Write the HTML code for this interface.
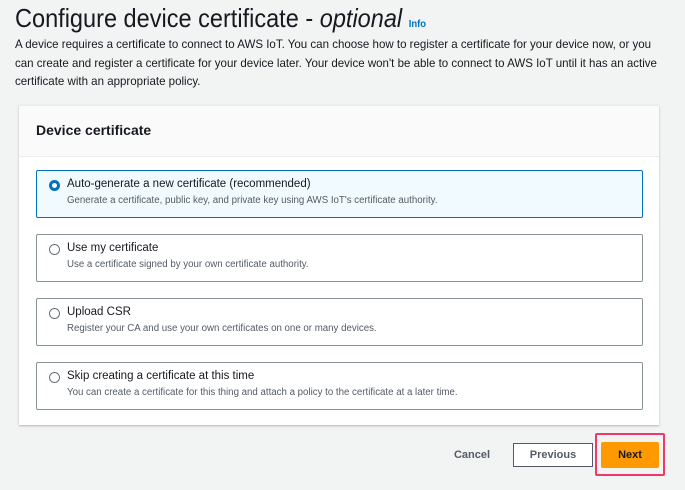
<!DOCTYPE html>
<html><head><style>
body{margin:0;width:685px;height:490px;background:#f2f3f3;font-family:"Liberation Sans",sans-serif;color:#16191f;overflow:hidden;position:relative}
.abs{position:absolute}
h1{position:absolute;left:15px;top:3px;margin:0;font-weight:400;font-size:26px;white-space:nowrap;transform:scaleX(0.905);transform-origin:left top}
h1 i{font-style:italic}
h1 .info{font-size:10.5px;color:#0073bb;font-weight:700;font-style:normal}
p{position:absolute;left:15px;top:35px;margin:0;font-size:12px;line-height:18.5px;color:#16191f;white-space:nowrap;transform:scaleX(0.96);transform-origin:left top}
.card{left:19px;top:105px;width:640px;height:319px;background:#fff;box-shadow:0 1px 2px rgba(0,0,0,.25);border-top:1px solid #eaeded}
.hdr{left:0;top:0;width:640px;height:50px;background:#fafafa;border-bottom:1px solid #eaeded}
.hdr b{position:absolute;left:17px;top:16px;font-size:14px}
.opt{left:17px;width:605px;height:46px;border:1px solid #879596;border-radius:2px;background:#fff}
.opt.sel{border-color:#0073bb;background:#f1faff}
.opt .r{position:absolute;left:12px;top:9px;width:9px;height:9px;border:1px solid #687078;border-radius:50%;background:#fff}
.opt.sel .r{border:3px solid #0073bb;width:5px;height:5px}
.opt .t{position:absolute;left:30px;top:7px;font-size:11.5px;white-space:nowrap}
.opt .d{position:absolute;left:30px;top:24px;font-size:9.7px;color:#545b64;white-space:nowrap}
.btn{font-size:11px;font-weight:700;text-align:center;line-height:24px;height:24px}
</style></head><body>
<h1>Configure device certificate - <i>optional</i> <span class="info">Info</span></h1>
<p>A device requires a certificate to connect to AWS IoT. You can choose how to register a certificate for your device now, or you<br>can create and register a certificate for your device later. Your device won't be able to connect to AWS IoT until it has an active<br>certificate with an appropriate policy.</p>
<div class="abs card">
<div class="abs hdr"><b>Device certificate</b></div>
<div class="abs opt sel" style="top:64px"><div class="r"></div><div class="t">Auto-generate a new certificate (recommended)</div><div class="d">Generate a certificate, public key, and private key using AWS IoT's certificate authority.</div></div>
<div class="abs opt" style="top:128px"><div class="r"></div><div class="t">Use my certificate</div><div class="d">Use a certificate signed by your own certificate authority.</div></div>
<div class="abs opt" style="top:192px"><div class="r"></div><div class="t">Upload CSR</div><div class="d">Register your CA and use your own certificates on one or many devices.</div></div>
<div class="abs opt" style="top:256px"><div class="r"></div><div class="t">Skip creating a certificate at this time</div><div class="d">You can create a certificate for this thing and attach a policy to the certificate at a later time.</div></div>
</div>
<div class="abs btn" style="left:450px;top:443px;width:44px;color:#545b64">Cancel</div>
<div class="abs btn" style="left:513px;top:443px;width:78px;height:22px;line-height:22px;border:1px solid #545b64;background:#fff;color:#545b64">Previous</div>
<div class="abs" style="left:595px;top:433px;width:66px;height:39px;border:2px solid #f2386a;border-radius:2px"></div>
<div class="abs btn" style="left:601px;top:442px;width:58px;height:26px;line-height:26px;background:#ff9900;color:#16191f;border-radius:2px">Next</div>
</body></html>
